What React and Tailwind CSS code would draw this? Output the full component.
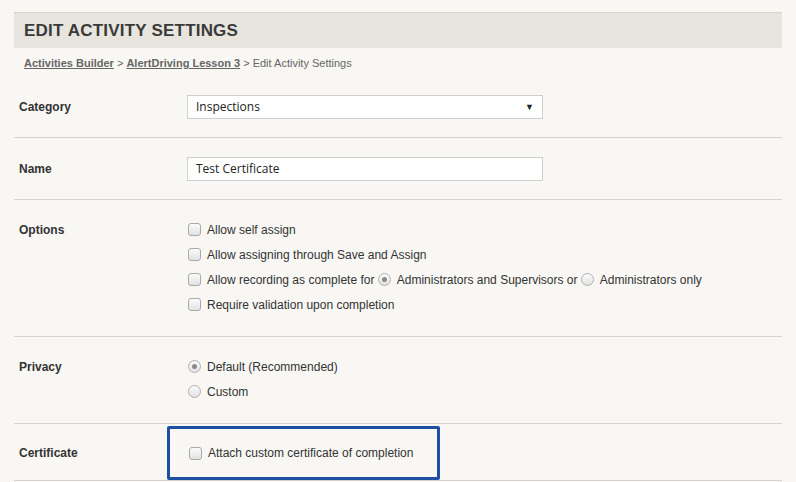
import React from 'react';

const Check = () => (
  <span className="inline-block w-[13px] h-[13px] rounded-[3px] border border-[#a9a9a9] bg-gradient-to-b from-[#fbfbfb] to-[#e2e2e2] mr-[6px] shrink-0" />
);

const Radio = ({ on }) => (
  <span className="inline-flex items-center justify-center w-[13px] h-[13px] rounded-full border border-[#b0b0b0] bg-gradient-to-b from-[#fbfbfb] to-[#e2e2e2] mr-[6px] shrink-0">
    {on && <span className="w-[5px] h-[5px] rounded-full bg-[#8a8a8a]" />}
  </span>
);

const Row = ({ label, h, children }) => (
  <div className={`flex items-center border-b border-[#d6d4d0] ${h}`}>
    <div className="w-[173px] h-[25px] flex items-center pl-[5px] font-bold text-[12px] text-[#333]">{label}</div>
    <div className="flex-1">{children}</div>
  </div>
);

const Item = ({ children }) => (
  <div className="flex items-center h-[25px] pl-[1px] text-[12px] text-[#333]">{children}</div>
);

export default function App() {
  return (
    <div className="w-[796px] h-[482px] overflow-hidden bg-[#f8f7f3] pt-[12px] px-[14px] font-[Liberation_Sans,Arial,sans-serif]">
      <div className="h-[36px] bg-[#e8e5df] border-t border-[#d6d3cd] flex items-center pl-[10px]">
        <h1 className="text-[17px] font-bold text-[#3a3a3a] tracking-[0.2px]">EDIT ACTIVITY SETTINGS</h1>
      </div>
      <div className="pl-[10px] pt-[7px] h-[32px] text-[11px] text-[#666]">
        <a className="underline font-bold text-[#666]">Activities Builder</a> &gt;{' '}
        <a className="underline font-bold text-[#666]">AlertDriving Lesson 3</a> &gt; Edit Activity Settings
      </div>
      <Row label="Category" h="h-[58px] pb-[4px]">
        <div className="w-[356px] h-[24px] bg-white border border-[#cfcfcf] flex items-center justify-between px-[8px] text-[12px] text-[#222] font-[Open_Sans,sans-serif]">
          <span>Inspections</span>
          <span className="text-[9px]">▼</span>
        </div>
      </Row>
      <Row label="Name" h="h-[62px]">
        <div className="w-[356px] h-[24px] bg-white border border-[#cfcfcf] flex items-center px-[8px] text-[12px] text-[#222] font-[Open_Sans,sans-serif]">
          Test Certificate
        </div>
      </Row>
      <Row label="Options" h="h-[137px] !items-start pt-[17px]">
        <div>
          <Item><Check />Allow self assign</Item>
          <Item><Check />Allow assigning through Save and Assign</Item>
          <Item><Check />Allow recording as complete for&nbsp;<Radio on />Administrators and Supervisors or&nbsp;<Radio />Administrators only</Item>
          <Item><Check />Require validation upon completion</Item>
        </div>
      </Row>
      <Row label="Privacy" h="h-[87px] !items-start pt-[17px]">
        <Item><Radio on />Default (Recommended)</Item>
        <Item><Radio />Custom</Item>
      </Row>
      <Row label="Certificate" h="h-[57px] pt-[2px]">
        <div className="-ml-[20px] w-[273px] h-[54px] border-[3px] border-[#1d4fa3] rounded-[2px] flex items-center pl-[18px]">
          <Item><Check />Attach custom certificate of completion</Item>
        </div>
      </Row>
    </div>
  );
}
